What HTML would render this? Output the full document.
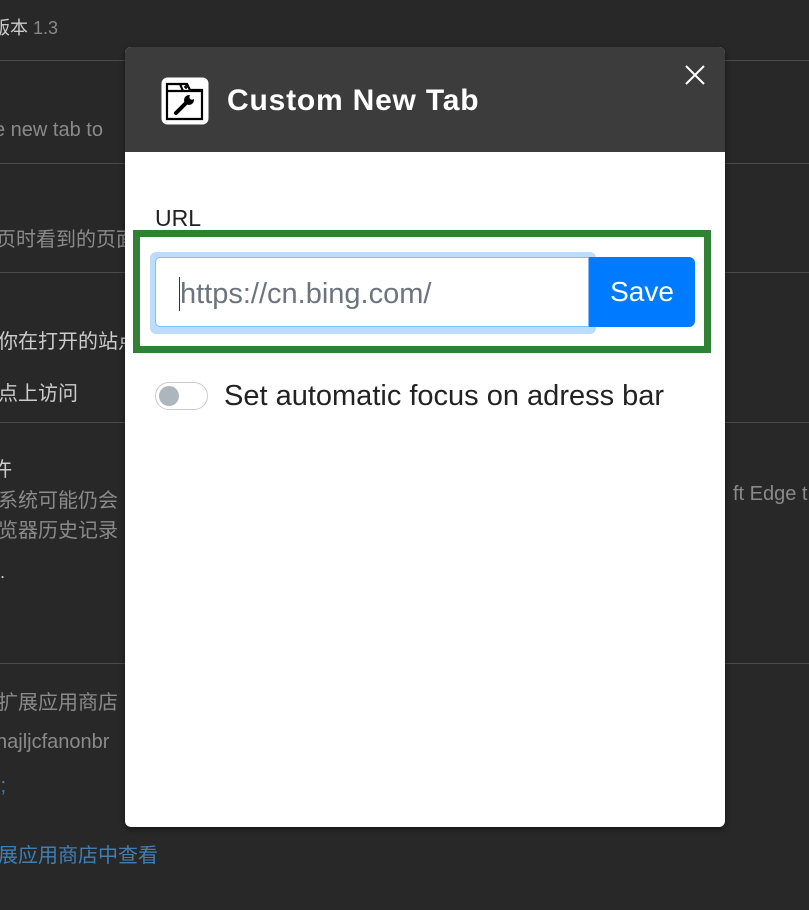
<!DOCTYPE html>
<html><head><meta charset="utf-8"><style>
*{margin:0;padding:0;box-sizing:border-box}
body{width:809px;height:910px;background:#282828;position:relative;overflow:hidden;font-family:"Liberation Sans","Noto Sans CJK SC",sans-serif}
.t{position:absolute;white-space:nowrap;font-size:18px;color:#8a8a8a}
.l{position:absolute;left:0;right:0;height:1px;background:#4a4a4a}
.dlg{position:absolute;left:125px;top:47px;width:600px;height:780px;background:#fff;border-radius:6px;overflow:hidden;box-shadow:0 2px 6px rgba(0,0,0,.5)}
.hd{height:105px;background:#3c3c3c;position:relative}
</style></head><body>
<div class="l" style="top:60px"></div>
<div class="l" style="top:163px"></div>
<div class="l" style="top:272px"></div>
<div class="l" style="top:422px"></div>
<div class="l" style="top:663px"></div>
<div class="t" style="left:-8px;top:14px;color:#ccc">版本 <span style="color:#888">1.3</span></div>
<div class="t" style="left:-6px;top:119px;font-size:20px">e new tab to</div>
<div class="t" style="left:-4px;top:223px;font-size:20px">页时看到的页面</div>
<div class="t" style="left:-2px;top:325px;color:#ccc;font-size:20px">你在打开的站点</div>
<div class="t" style="left:-2px;top:377px;color:#ccc;font-size:20px">点上访问</div>
<div class="t" style="left:-8px;top:453px;color:#ccc;font-size:20px">许</div>
<div class="t" style="left:-2px;top:484px;font-size:20px">系统可能仍会</div>
<div class="t" style="left:-2px;top:514px;font-size:20px">览器历史记录</div>
<div class="t" style="left:733px;top:483px;font-size:20px">ft Edge t</div>
<div class="t" style="left:0;top:562px;color:#ccc">.</div>
<div class="t" style="left:-2px;top:686px;font-size:20px">扩展应用商店</div>
<div class="t" style="left:-4px;top:731px;font-size:20px">hajljcfanonbr</div>
<div class="t" style="left:-4px;top:775px;color:#3f7fb5;font-size:20px">l;</div>
<div class="t" style="left:-2px;top:839px;color:#3f7fb5;font-size:20px">展应用商店中查看</div>
<div class="dlg">
 <div class="hd">
  <svg style="position:absolute;left:36px;top:30px" width="48" height="48" viewBox="0 0 48 48">
   <rect x="0.5" y="0.5" width="47" height="47" rx="6" fill="#fff"/>
   <path d="M6 42V7h20l3 6h12v29z M6 14h35 M19 7l3 7" fill="none" stroke="#000" stroke-width="2.2"/>
   <path d="M25 8v4 M23 10h4" stroke="#000" stroke-width="1.5"/>
   <path d="M15 36l10-10" stroke="#000" stroke-width="4" stroke-linecap="round"/>
   <circle cx="28" cy="23" r="5" fill="#000"/>
   <circle cx="31" cy="20" r="2.6" fill="#fff"/>
  </svg>
  <div style="position:absolute;left:102px;top:37px;font-size:30px;letter-spacing:0.8px;font-weight:bold;color:#fff">Custom New Tab</div>
  <svg style="position:absolute;left:559px;top:17px" width="22" height="22" viewBox="0 0 22 22"><path d="M2 2L20 20M20 2L2 20" stroke="#fff" stroke-width="2"/></svg>
 </div>
 <div style="position:absolute;left:30px;top:158px;font-size:23px;color:#222">URL</div>
 <div style="position:absolute;left:8px;top:183px;width:578px;height:123px;border:7px solid #2e8233"></div>
 <div style="position:absolute;left:25px;top:205px;width:446px;height:82px;background:#bcdcfb;border-radius:6px"></div>
 <div style="position:absolute;left:30px;top:210px;width:434px;height:70px;background:#fff;border:1px solid #80bdff;border-radius:5px 0 0 5px"></div>
 <div style="position:absolute;left:54px;top:230px;font-size:29px;color:#6c757d;border-left:1px solid #333;line-height:34px">https://cn.bing.com/</div>
 <div style="position:absolute;left:464px;top:210px;width:106px;height:70px;background:#007bff;border-radius:0 6px 6px 0;color:#fff;font-size:28px;text-align:center;line-height:70px">Save</div>
 <div style="position:absolute;left:30px;top:335px;width:53px;height:28px;border:1px solid #ccc;border-radius:14px;background:#fff"></div>
 <div style="position:absolute;left:34px;top:339px;width:20px;height:20px;border-radius:50%;background:#adb5bd"></div>
 <div style="position:absolute;left:99px;top:333px;font-size:29px;color:#222">Set automatic focus on adress bar</div>
</div>
</body></html>
